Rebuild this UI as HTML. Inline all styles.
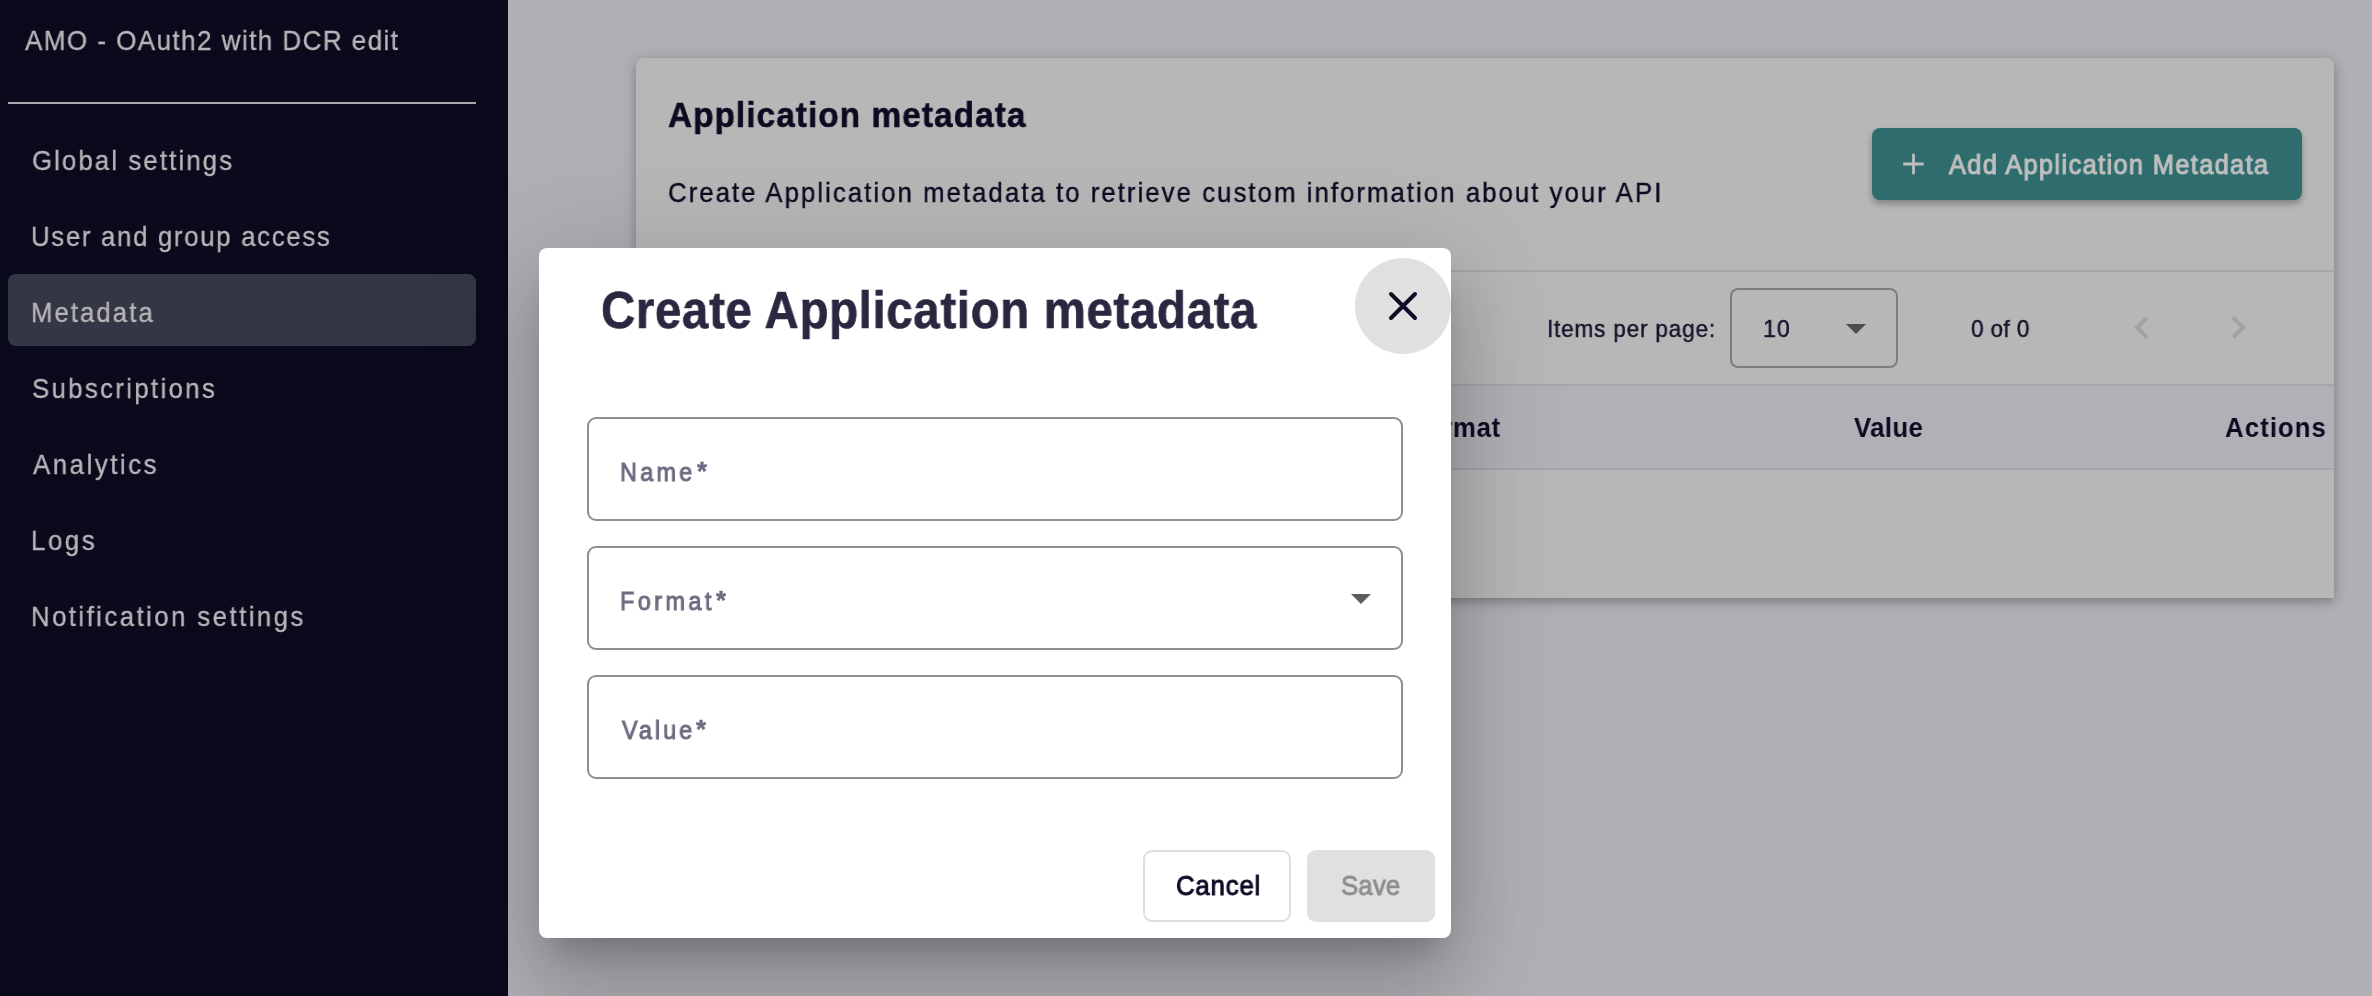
<!DOCTYPE html>
<html>
<head>
<meta charset="utf-8">
<title>Application metadata</title>
<style>
html,body{margin:0;padding:0;}
body{width:2372px;height:996px;overflow:hidden;position:relative;background:#b0afb5;font-family:"Liberation Sans",sans-serif;}
.abs{position:absolute;}
.t{position:absolute;white-space:nowrap;line-height:1;margin:0;padding:0;will-change:transform;}
/* sidebar */
#side{left:0;top:0;width:508px;height:996px;background:#0b0a1d;}
#divider{left:8px;top:102px;width:468px;height:2px;background:#a9a9ad;}
#sel{left:8px;top:274px;width:468px;height:72px;border-radius:8px;background:#353645;}
/* card */
#card{left:636px;top:58px;width:1698px;height:540px;background:#b7b7b7;border-radius:8px 8px 0 0;box-shadow:0 4px 8px rgba(0,0,0,.20),0 2px 18px rgba(0,0,0,.13);}
.hl{position:absolute;left:636px;width:1698px;height:2px;background:#a6a6a8;}
#thead{left:636px;top:386px;width:1698px;height:82px;background:#b1b0b6;}
/* dialog */
#dlg{left:539px;top:248px;width:912px;height:690px;background:#fff;border-radius:8px;box-shadow:0 22px 30px -14px rgba(0,0,0,.2),0 48px 76px 6px rgba(0,0,0,.14),0 18px 104px 20px rgba(0,0,0,.12);}
.fld{position:absolute;left:587px;width:812px;height:100px;border:2px solid #8e8e90;border-radius:9px;background:#fff;}
.lbl{color:#6e6c80;font-size:28px;}
</style>
</head>
<body>

<!-- ============ SIDEBAR ============ -->
<div id="side" class="abs">
  <div id="divider" class="abs"></div>
  <div id="sel" class="abs"></div>
</div>

<!-- ============ CARD ============ -->
<div id="card" class="abs"></div>
<div id="thead" class="abs"></div>
<div class="hl" style="top:270px;"></div>
<div class="hl" style="top:384px;"></div>
<div class="hl" style="top:468px;"></div>


<!-- add button -->
<div class="abs" id="addbtn" style="left:1872px;top:128px;width:430px;height:72px;border-radius:8px;background:#2f6c6e;box-shadow:0 4px 6px rgba(0,0,0,.28);"></div>
<svg class="abs" style="left:1901px;top:152px;" width="24" height="24" viewBox="0 0 24 24"><path d="M12.5 1.7v20.6M2.2 12h20.6" stroke="#bdbdbd" stroke-width="2.8" fill="none"/></svg>

<!-- paginator -->
<div class="abs" style="left:1730px;top:288px;width:164px;height:76px;border:2px solid #7d7d80;border-radius:8px;"></div>
<svg class="abs" style="left:1846px;top:324px;" width="20" height="10" viewBox="0 0 20 10"><path d="M0 0h20L10 10z" fill="#4e4e51"/></svg>
<svg class="abs" style="left:2130px;top:312px;" width="24" height="30" viewBox="0 0 24 30"><path d="M17 5.5L7 15.5l10 10" stroke="#a2a2a4" stroke-width="4" fill="none"/></svg>
<svg class="abs" style="left:2226px;top:312px;" width="24" height="30" viewBox="0 0 24 30"><path d="M7 5.5L17 15.5L7 25.5" stroke="#a2a2a4" stroke-width="4" fill="none"/></svg>

<!-- table header -->

<div class="t" id="sb0" style="left:24.5px;top:26.9px;font-size:28px;color:#b6b6b8;letter-spacing:1.54px;transform:scaleX(0.9300);transform-origin:0 0;-webkit-text-stroke:0.35px #b6b6b8;">AMO - OAuth2 with DCR edit</div>
<div class="t" id="sb1" style="left:32.1px;top:146.5px;font-size:28px;color:#b6b6b8;letter-spacing:2.30px;transform:scaleX(0.9200);transform-origin:0 0;-webkit-text-stroke:0.35px #b6b6b8;">Global settings</div>
<div class="t" id="sb2" style="left:31.2px;top:222.5px;font-size:28px;color:#b6b6b8;letter-spacing:1.84px;transform:scaleX(0.9200);transform-origin:0 0;-webkit-text-stroke:0.35px #b6b6b8;">User and group access</div>
<div class="t" id="sb3" style="left:31.2px;top:298.5px;font-size:28px;color:#b6b6b8;letter-spacing:2.21px;transform:scaleX(0.9200);transform-origin:0 0;-webkit-text-stroke:0.35px #b6b6b8;">Metadata</div>
<div class="t" id="sb4" style="left:32.3px;top:374.5px;font-size:28px;color:#b6b6b8;letter-spacing:2.55px;transform:scaleX(0.9200);transform-origin:0 0;-webkit-text-stroke:0.35px #b6b6b8;">Subscriptions</div>
<div class="t" id="sb5" style="left:33.0px;top:450.5px;font-size:28px;color:#b6b6b8;letter-spacing:2.78px;transform:scaleX(0.9200);transform-origin:0 0;-webkit-text-stroke:0.35px #b6b6b8;">Analytics</div>
<div class="t" id="sb6" style="left:31.2px;top:526.5px;font-size:28px;color:#b6b6b8;letter-spacing:2.86px;transform:scaleX(0.9200);transform-origin:0 0;-webkit-text-stroke:0.35px #b6b6b8;">Logs</div>
<div class="t" id="sb7" style="left:31.2px;top:602.5px;font-size:28px;color:#b6b6b8;letter-spacing:2.66px;transform:scaleX(0.9200);transform-origin:0 0;-webkit-text-stroke:0.35px #b6b6b8;">Notification settings</div>
<div class="t" id="h1" style="left:667.6px;top:97.3px;font-size:35px;font-weight:bold;color:#0c0a20;letter-spacing:1.17px;transform:scaleX(0.9500);transform-origin:0 0;-webkit-text-stroke:0.6px #0c0a20;">Application metadata</div>
<div class="t" id="sub" style="left:667.7px;top:178.5px;font-size:28px;color:#0c0a20;letter-spacing:2.22px;transform:scaleX(0.9200);transform-origin:0 0;-webkit-text-stroke:0.4px #0c0a20;">Create Application metadata to retrieve custom information about your API</div>
<div class="t" id="addtxt" style="left:1948.8px;top:150.6px;font-size:27.5px;color:#bfbfbf;letter-spacing:1.52px;transform:scaleX(0.9200);transform-origin:0 0;-webkit-text-stroke:1.1px #bfbfbf;">Add Application Metadata</div>
<div class="t" id="ipp" style="left:1547.4px;top:317.3px;font-size:24px;color:#15132a;letter-spacing:0.86px;transform:scaleX(0.9400);transform-origin:0 0;-webkit-text-stroke:0.45px #15132a;">Items per page:</div>
<div class="t" id="ten" style="left:1762.8px;top:317.3px;font-size:24px;color:#15132a;letter-spacing:1.25px;transform:scaleX(0.9626);transform-origin:0 0;-webkit-text-stroke:0.45px #15132a;">10</div>
<div class="t" id="zero" style="left:1971.2px;top:317.3px;font-size:24px;color:#15132a;letter-spacing:0.40px;transform:scaleX(0.9400);transform-origin:0 0;-webkit-text-stroke:0.45px #15132a;">0 of 0</div>
<div class="t" id="thf" style="left:1409.1px;top:413.7px;font-size:28px;font-weight:bold;color:#0c0a20;letter-spacing:0.85px;transform:scaleX(0.9200);transform-origin:0 0;">Format</div>
<div class="t" id="thv" style="left:1853.6px;top:413.7px;font-size:28px;font-weight:bold;color:#0c0a20;letter-spacing:0.39px;transform:scaleX(0.9200);transform-origin:0 0;">Value</div>
<div class="t" id="tha" style="left:2225.2px;top:413.7px;font-size:28px;font-weight:bold;color:#0c0a20;letter-spacing:1.17px;transform:scaleX(0.9200);transform-origin:0 0;">Actions</div>
<!-- ============ DIALOG ============ -->
<div id="dlg" class="abs"></div>
<div class="abs" style="left:1355px;top:258px;width:96px;height:96px;border-radius:50%;background:#e0e0e0;"></div>
<svg class="abs" style="left:1385px;top:288px;" width="36" height="36" viewBox="0 0 36 36"><path d="M6 6l24 24M30 6L6 30" stroke="#100c27" stroke-width="4" stroke-linecap="round" fill="none"/></svg>

<div class="fld" style="top:417px;"></div>
<div class="fld" style="top:546px;"></div>
<div class="fld" style="top:675px;"></div>
<svg class="abs" style="left:1351px;top:594px;" width="20" height="10" viewBox="0 0 20 10"><path d="M0 0h20L10 10z" fill="#5c5c63"/></svg>

<div class="abs" style="left:1143px;top:850px;width:144px;height:68px;border:2px solid #dedede;border-radius:9px;background:#fff;"></div>
<div class="abs" style="left:1307px;top:850px;width:128px;height:72px;border-radius:9px;background:#e0e0e0;"></div>

<div class="t" id="dt" style="left:600.9px;top:284.6px;font-size:51px;font-weight:bold;color:#2a2840;letter-spacing:0.69px;transform:scaleX(0.9300);transform-origin:0 0;-webkit-text-stroke:0.6px #2a2840;">Create Application metadata</div>
<div class="t" id="l1" style="left:620.1px;top:459.3px;font-size:26px;color:#6e6c80;letter-spacing:3.63px;transform:scaleX(0.9000);transform-origin:0 0;-webkit-text-stroke:1.0px #6e6c80;">Name</div>
<div class="t" id="l1s" style="left:696.8px;top:459.1px;font-size:25.5px;font-weight:bold;color:#6e6c80;-webkit-text-stroke:0.5px #6e6c80;">*</div>
<div class="t" id="l2" style="left:620.1px;top:588.3px;font-size:26px;color:#6e6c80;letter-spacing:3.82px;transform:scaleX(0.9000);transform-origin:0 0;-webkit-text-stroke:1.0px #6e6c80;">Format</div>
<div class="t" id="l2s" style="left:716.0px;top:588.0px;font-size:25.5px;font-weight:bold;color:#6e6c80;-webkit-text-stroke:0.5px #6e6c80;">*</div>
<div class="t" id="l3" style="left:621.9px;top:717.3px;font-size:26px;color:#6e6c80;letter-spacing:3.36px;transform:scaleX(0.9000);transform-origin:0 0;-webkit-text-stroke:1.0px #6e6c80;">Value</div>
<div class="t" id="l3s" style="left:695.7px;top:717.0px;font-size:25.5px;font-weight:bold;color:#6e6c80;-webkit-text-stroke:0.5px #6e6c80;">*</div>
<div class="t" id="cancel" style="left:1175.5px;top:872.3px;font-size:28px;color:#0e0c27;letter-spacing:0.88px;transform:scaleX(0.9200);transform-origin:0 0;-webkit-text-stroke:1.0px #0e0c27;">Cancel</div>
<div class="t" id="save" style="left:1341.4px;top:872.3px;font-size:28px;color:#8f8f8f;letter-spacing:0.19px;transform:scaleX(0.9200);transform-origin:0 0;-webkit-text-stroke:0.9px #8f8f8f;">Save</div>
</body>
</html>
